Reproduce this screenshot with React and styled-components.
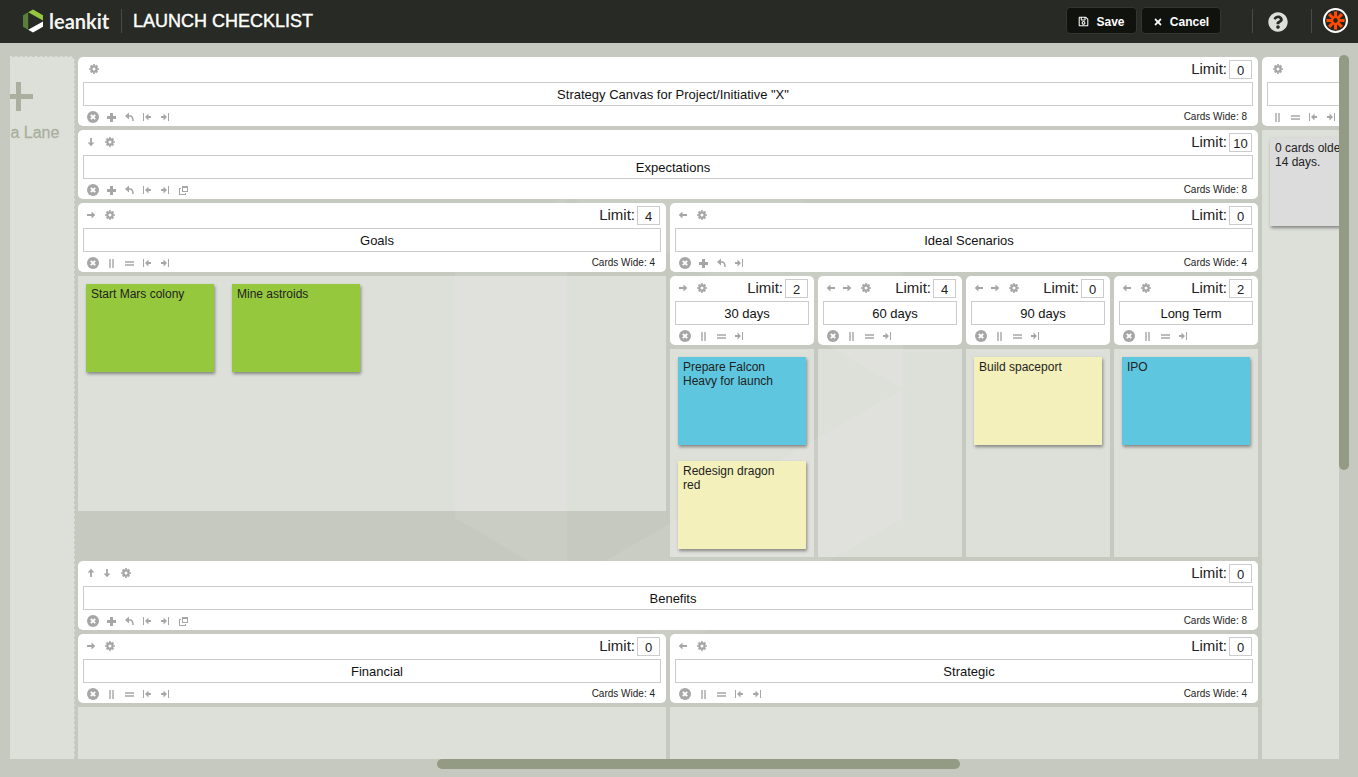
import React from "react";
import styled, { createGlobalStyle } from "styled-components";
import { FaQuestionCircle, FaRegSave, FaTimes } from "react-icons/fa";

const GlobalStyle = createGlobalStyle`
  *, *::before, *::after { box-sizing: border-box; }
  body {
    margin: 0;
    background: #c6c9bf;
    color: #222;
    font-family: "Liberation Sans", Arial, Helvetica, sans-serif;
  }
  button, input { font-family: inherit; }
`;

const Page = styled.div`
  position: relative;
  display: flex;
  flex-direction: column;
  min-height: 100vh;
  overflow: hidden;
`;

const Watermark = styled.svg`
  position: absolute;
  top: 50%;
  left: 50%;
  width: 448px;
  height: 516px;
  transform: translate(-50%, -50%);
  fill: #f4fff8;
  fill-opacity: 0.09;
`;

/* ---------- top bar ---------- */

const TopBar = styled.header`
  position: relative;
  display: flex;
  align-items: center;
  height: 43px;
  padding: 0 10px 2px 22px;
  background: #282b25;
  color: #fff;
`;

const Brand = styled.a`
  display: flex;
  align-items: center;
  gap: 5px;
  width: 89px;
  color: #f4f5f2;
  font: 700 20px/24px Lato, sans-serif;
  text-decoration: none;
`;

const Divider = styled.span`
  width: 1px;
  height: 24px;
  margin: 0 ${(p) => p.$after}px 0 ${(p) => p.$before}px;
  background: #494c45;
`;

const BoardTitle = styled.h1`
  flex: 1;
  margin: 0;
  font-size: 18px;
  font-weight: 400;
  line-height: 24px;
  -webkit-text-stroke: 0.4px #fff;
`;

const BarButton = styled.button`
  display: flex;
  align-items: center;
  justify-content: center;
  gap: 7px;
  width: ${(p) => p.$width}px;
  height: 27px;
  margin-right: 4px;
  padding: 2px 0 0;
  border: 1px solid #33362f;
  border-radius: 4px;
  background: #10120e;
  color: #fff;
  font-size: 12px;
  font-weight: 700;
`;

const RoundButton = styled.button`
  display: flex;
  padding: 0;
  border: 0;
  border-radius: 50%;
  background: none;
  color: #dde0d9;
`;

const HelpButton = styled(RoundButton)`
  padding-top: 2px;
`;

/* ---------- board frame ---------- */

const Frame = styled.main`
  position: relative;
  flex: 1;
  display: grid;
  grid-template: minmax(0, 1fr) 10px / minmax(0, 1fr) 10px;
  padding: 12px 9px 8px 10px;
`;

const Viewport = styled.div`
  display: flex;
  margin-top: 1px;
  overflow: hidden;
`;

const VerticalTrack = styled.div`
  display: flex;
`;

const VerticalThumb = styled.div`
  width: 10px;
  height: 59%;
  border-radius: 5px;
  background: #939b85;
`;

const HorizontalThumb = styled.div`
  width: 39.4%;
  height: 10px;
  margin-left: 32.1%;
  border-radius: 5px;
  background: #939b85;
`;

const AddLaneClip = styled.div`
  flex: none;
  display: flex;
  justify-content: flex-end;
  width: 65px;
  margin-right: 3px;
  overflow: hidden;
`;

const AddLane = styled.button`
  flex: none;
  display: flex;
  flex-direction: column;
  align-items: center;
  gap: 12px;
  width: 113px;
  padding: 25px 0 0;
  border: 1px dashed #c6c9bf;
  border-bottom: 0;
  border-radius: 5px 5px 0 0;
  background: #dde0d9;
  color: #a9b09f;
  font-size: 16px;
  line-height: 20px;
  -webkit-text-stroke: 0.3px #a9b09f;
`;

const Stack = styled.div`
  flex: ${(p) => p.$grow || "none"};
  display: flex;
  flex-direction: column;
  gap: 4px;
  min-width: 0;
`;

const MainLanes = styled(Stack)`
  padding-top: 1px;
`;

const Columns = styled.div`
  flex: ${(p) => p.$grow || "none"};
  display: grid;
  grid-template-columns: repeat(${(p) => p.$count}, minmax(0, 1fr));
  gap: 4px;
`;

const ArchiveClip = styled.div`
  flex: none;
  display: flex;
  width: 77px;
  margin-left: 4px;
  padding-top: 1px;
  overflow: hidden;
`;

const ArchiveLane = styled(Stack)`
  width: 144px;
`;

/* ---------- lane ---------- */

const LaneHead = styled.section`
  height: 69px;
  border-radius: 5px;
  background: #fff;
`;

const HeadTop = styled.div`
  display: flex;
  align-items: center;
  gap: 6px;
  height: 25px;
  padding: 0 6px 0 8px;
`;

const HeadBottom = styled.div`
  display: flex;
  align-items: flex-end;
  gap: 6px;
  height: 20px;
  padding: 0 11px 3px 9px;
`;

const IconButton = styled.button`
  display: flex;
  padding: 0;
  border: 0;
  background: none;
  color: #a6a6a6;
`;

const MoveButton = styled(IconButton)`
  padding-bottom: 2px;
`;

const GearButton = styled(MoveButton)`
  margin-left: 2px;
`;

const Limit = styled.label`
  display: flex;
  align-items: flex-start;
  gap: 2px;
  margin-left: auto;
  font-size: 15px;
  line-height: 17px;
`;

const LimitInput = styled.input`
  width: 23px;
  height: 19px;
  padding: 1px 0 0;
  border: 1px solid #ccc;
  background: #fff;
  color: #222;
  font-size: 13px;
  text-align: center;
`;

const TitleRow = styled.div`
  display: flex;
  padding: 0 5px;
`;

const TitleInput = styled.input`
  flex: 1;
  min-width: 0;
  height: 24px;
  padding: 0 4px 0 14px;
  border: 1px solid #ccc;
  background: #fff;
  color: #111;
  font-size: 13px;
  text-align: center;
`;

const CardsWide = styled.span`
  margin-left: auto;
  font-size: 10px;
  line-height: 12px;
`;

const LaneBody = styled.div`
  flex: ${(p) => p.$grow || "none"};
  display: flex;
  flex-wrap: wrap;
  align-content: flex-start;
  gap: 16px 18px;
  min-height: ${(p) => p.$min}px;
  padding: 8px;
  background: rgba(255, 255, 255, 0.41);
`;

const Card = styled.article`
  width: 128px;
  height: 88px;
  padding: 3px 20px 3px 5px;
  background: ${(p) => p.$color};
  box-shadow: 1px 2px 3px rgba(0, 0, 0, 0.4);
  font-size: 12px;
  line-height: 14px;
`;

const COLORS = { green: "#96c83e", blue: "#5ec7df", yellow: "#f4f0bb", gray: "#dcdcdd" };

/* ---------- icons ---------- */

function ArrowIcon({ dir }) {
  const turn = { right: 0, down: 90, left: 180, up: 270 }[dir];
  return (
    <svg width="10" height="10" viewBox="0 0 10 10" fill="currentColor">
      <path d="M1 4.1h4.5V1.6L9.3 5 5.5 8.4V5.9H1z" transform={`rotate(${turn} 5 5)`} />
    </svg>
  );
}

function GearIcon() {
  return (
    <svg width="12" height="12" viewBox="0 0 12 12" fill="none" stroke="currentColor">
      <circle cx="6" cy="6" r="2.6" strokeWidth="2.2" />
      <circle cx="6" cy="6" r="4" strokeWidth="1.8" pathLength="16" strokeDasharray="1.1 0.9" strokeDashoffset="0.55" />
    </svg>
  );
}

const TOOLS = {
  close: {
    label: "Delete lane",
    art: (
      <>
        <circle cx="6" cy="6" r="6" />
        <path d="M3.8 3.8l4.4 4.4M8.2 3.8L3.8 8.2" stroke="#fff" strokeWidth="1.9" />
      </>
    ),
  },
  add: { label: "Add child lane", art: <path d="M5 2h3v3h3v3H8v3H5V8H2V5h3z" /> },
  undo: {
    label: "Undo split",
    art: (
      <>
        <path d="M2 5l4-3.5v7z" />
        <path d="M5 5h2q3 0 3 5" fill="none" stroke="currentColor" strokeWidth="1.5" />
      </>
    ),
  },
  before: { label: "Insert lane before", art: <path d="M2 2h1v8H2zM4 6l3.5-3.4V5H10v2H7.500v2.400z" /> },
  after: { label: "Insert lane after", art: <path d="M9 2h1v8H9zM8 6L4.500 2.600V5H2v2h2.500v2.400z" /> },
  copy: {
    label: "Clone lane",
    art: <path d="M5 2h6v6H5zM6 4v3h4V4zM2 4h2v1H3v5h5V9h1v2H2z" fillRule="evenodd" />,
  },
  columns: {
    label: "Split into columns",
    art: <path d="M5 2v9M8 2v9" stroke="currentColor" strokeWidth="1.4" />,
  },
  rows: {
    label: "Split into rows",
    art: <path d="M2 5h9M2 8h9" stroke="currentColor" strokeWidth="1.4" />,
  },
};

function Asterisk() {
  const spokes = [0, 45, 90, 135, 180, 225, 270, 315];
  return (
    <svg width="25" height="25" viewBox="0 0 25 25">
      <circle cx="12.5" cy="12.5" r="11.5" fill="#2b2520" stroke="#fff" strokeWidth="2" />
      {spokes.map((a) => (
        <path key={a} d="M12.5 10V3.4" stroke="#ff4a00" strokeWidth="3" transform={`rotate(${a} 12.5 12.5)`} />
      ))}
      <circle cx="12.5" cy="12.5" r="3.4" fill="none" stroke="#ff4a00" strokeWidth="2" />
    </svg>
  );
}

function LogoMark() {
  return (
    <svg width="22" height="24" viewBox="0 0 22 24">
      <path fill="#5b7f38" d="M1 6.3L6.2 3.3v17.4L1 17.7z" />
      <path fill="#96c83e" d="M6.200 3.300L11 .5l10 5.800v5.200z" />
      <path fill="#fff" d="M6.200 20.700L21 12.500v5.200l-10 5.800z" />
    </svg>
  );
}

/* ---------- parts ---------- */

const SPLIT = ["close", "columns", "rows", "before", "after"];
const PARENT = ["close", "add", "undo", "before", "after"];

function Head({ title, limit, wide, arrows = [], tools }) {
  return (
    <LaneHead>
      <HeadTop>
        {arrows.map((dir) => (
          <MoveButton key={dir} type="button" aria-label={`Move ${dir}`}>
            <ArrowIcon dir={dir} />
          </MoveButton>
        ))}
        <GearButton type="button" aria-label="Lane settings">
          <GearIcon />
        </GearButton>
        {limit !== undefined && (
          <Limit>
            Limit:
            <LimitInput defaultValue={limit} />
          </Limit>
        )}
      </HeadTop>
      <TitleRow>
        <TitleInput aria-label="Lane title" defaultValue={title} />
      </TitleRow>
      <HeadBottom>
        {tools.map((name) => (
          <IconButton key={name} type="button" aria-label={TOOLS[name].label}>
            <svg width="12" height="12" viewBox="0 0 12 12" fill="currentColor">
              {TOOLS[name].art}
            </svg>
          </IconButton>
        ))}
        {wide && <CardsWide>Cards Wide: {wide}</CardsWide>}
      </HeadBottom>
    </LaneHead>
  );
}

const SCENARIOS = [
  {
    title: "30 days",
    limit: 2,
    arrows: ["right"],
    cards: [
      ["Prepare Falcon Heavy for launch", "blue"],
      ["Redesign dragon red", "yellow"],
    ],
  },
  { title: "60 days", limit: 4, arrows: ["left", "right"], cards: [] },
  { title: "90 days", limit: 0, arrows: ["left", "right"], cards: [["Build spaceport", "yellow"]] },
  { title: "Long Term", limit: 2, arrows: ["left"], cards: [["IPO", "blue"]] },
];

function Cards({ items }) {
  return items.map(([text, color]) => (
    <Card key={text} $color={COLORS[color]}>
      {text}
    </Card>
  ));
}

export default function App() {
  return (
    <Page>
      <GlobalStyle />
      <Watermark viewBox="0 0 448 516" aria-hidden="true">
        <path d="M0 129L112 64v388L0 387z" />
        <path d="M112 64L224 0l224 129v129z" />
        <path d="M112 452l336-194v129L224 516z" />
      </Watermark>

      <TopBar>
        <Brand href="#">
          <LogoMark />
          leankit
        </Brand>
        <Divider $before={10} $after={11} />
        <BoardTitle>LAUNCH CHECKLIST</BoardTitle>
        <BarButton type="button" $width={71}>
          <FaRegSave size={11} />
          Save
        </BarButton>
        <BarButton type="button" $width={80}>
          <FaTimes size={10} />
          Cancel
        </BarButton>
        <Divider $before={27} $after={15} />
        <HelpButton type="button" aria-label="Help">
          <FaQuestionCircle size={20} />
        </HelpButton>
        <Divider $before={23} $after={11} />
        <RoundButton type="button" aria-label="Account">
          <Asterisk />
        </RoundButton>
      </TopBar>

      <Frame>
        <Viewport>
          <AddLaneClip>
            <AddLane type="button">
              <svg width="29" height="29" viewBox="0 0 29 29" fill="currentColor" aria-hidden="true">
                <path d="M12 0h5v12h12v5H17v12h-5V17H0v-5h12z" />
              </svg>
              Add a Lane
            </AddLane>
          </AddLaneClip>

          <MainLanes $grow={1}>
            <Head title={'Strategy Canvas for Project/Initiative "X"'} limit={0} wide={8} tools={PARENT} />
            <Head title="Expectations" limit={10} wide={8} arrows={["down"]} tools={[...PARENT, "copy"]} />
            <Columns $count={2}>
              <Stack>
                <Head title="Goals" limit={4} wide={4} arrows={["right"]} tools={SPLIT} />
                <LaneBody $min={235}>
                  <Cards
                    items={[
                      ["Start Mars colony", "green"],
                      ["Mine astroids", "green"],
                    ]}
                  />
                </LaneBody>
              </Stack>
              <Stack>
                <Head
                  title="Ideal Scenarios"
                  limit={0}
                  wide={4}
                  arrows={["left"]}
                  tools={["close", "add", "undo", "after"]}
                />
                <Columns $count={4}>
                  {SCENARIOS.map(({ cards, ...head }) => (
                    <Stack key={head.title}>
                      <Head {...head} tools={["close", "columns", "rows", "after"]} />
                      <LaneBody $grow={1} $min={208}>
                        <Cards items={cards} />
                      </LaneBody>
                    </Stack>
                  ))}
                </Columns>
              </Stack>
            </Columns>
            <Head title="Benefits" limit={0} wide={8} arrows={["up", "down"]} tools={[...PARENT, "copy"]} />
            <Columns $count={2} $grow={1}>
              <Stack>
                <Head title="Financial" limit={0} wide={4} arrows={["right"]} tools={SPLIT} />
                <LaneBody $grow={1} $min={52} />
              </Stack>
              <Stack>
                <Head title="Strategic" limit={0} wide={4} arrows={["left"]} tools={SPLIT} />
                <LaneBody $grow={1} $min={52} />
              </Stack>
            </Columns>
          </MainLanes>

          <ArchiveClip>
            <ArchiveLane>
              <Head title="" tools={["columns", "rows", "before", "after"]} />
              <LaneBody $grow={1} $min={104}>
                <Cards items={[["0 cards older than 14 days.", "gray"]]} />
              </LaneBody>
            </ArchiveLane>
          </ArchiveClip>
        </Viewport>
        <VerticalTrack>
          <VerticalThumb />
        </VerticalTrack>
        <HorizontalThumb />
      </Frame>
    </Page>
  );
}
